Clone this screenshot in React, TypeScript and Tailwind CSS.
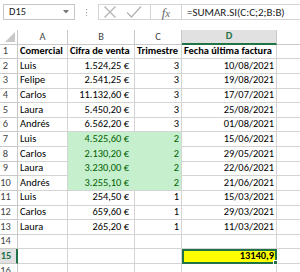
import React from "react";

type Row = {
  n: number;
  a?: string;
  b?: string;
  c?: string;
  d?: string;
  green?: boolean;
  last?: boolean;
};

const rows: Row[] = [
  { n: 2, a: "Luis", b: "1.524,25 €", c: "3", d: "10/08/2021" },
  { n: 3, a: "Felipe", b: "2.541,25 €", c: "3", d: "19/08/2021" },
  { n: 4, a: "Carlos", b: "11.132,60 €", c: "3", d: "17/07/2021" },
  { n: 5, a: "Laura", b: "5.450,20 €", c: "3", d: "25/08/2021" },
  { n: 6, a: "Andrés", b: "6.562,20 €", c: "3", d: "01/08/2021" },
  { n: 7, a: "Luis", b: "4.525,60 €", c: "2", d: "15/06/2021", green: true },
  { n: 8, a: "Carlos", b: "2.130,20 €", c: "2", d: "29/05/2021", green: true },
  { n: 9, a: "Laura", b: "3.230,00 €", c: "2", d: "22/06/2021", green: true },
  { n: 10, a: "Andrés", b: "3.255,10 €", c: "2", d: "21/06/2021", green: true, last: true },
  { n: 11, a: "Luis", b: "254,50 €", c: "1", d: "15/03/2021" },
  { n: 12, a: "Carlos", b: "659,60 €", c: "1", d: "29/03/2021" },
  { n: 13, a: "Laura", b: "265,20 €", c: "1", d: "11/03/2021" },
  { n: 14 },
];

const cols = "grid grid-cols-[18px_50px_67px_47px_95px_1fr]";
const cell = "h-[14.64px] border-r border-b border-[#d4d4d4] flex items-center overflow-hidden whitespace-nowrap";
const rowHead = "h-[14.64px] border-r border-b border-[#c8c8c8] flex items-center justify-center pr-[6px] text-[#444] bg-white";

// green conditional-format cells, no inner gridlines
function greenCls(r: Row, lastCol: boolean) {
  if (!r.green) return "";
  const base = "bg-[#c6efce] text-[#006100]";
  const right = lastCol ? "border-r-[#d4d4d4]" : "border-r-[#c6efce]";
  const bottom = r.last ? "border-b-[#d4d4d4]" : "border-b-[#c6efce]";
  return `${base} ${right} ${bottom}`;
}

const FormulaBar = () => (
  <div className="h-[30px] flex items-start pt-[4px] bg-white">
    <div className="ml-[3px] w-[72px] h-[16px] border border-[#c6c6c6] flex items-center justify-between px-[5px]">
      <span className="text-[#222]">D15</span>
      <svg width="6" height="4" viewBox="0 0 6 4">
        <path d="M0 0 L6 0 L3 3.5 Z" fill="#777" />
      </svg>
    </div>
    <div className="w-[23px] h-[16px] flex flex-col items-center justify-center gap-[2px]">
      <span className="w-[1px] h-[1px] bg-[#999]" />
      <span className="w-[1px] h-[1px] bg-[#999]" />
      <span className="w-[1px] h-[1px] bg-[#999]" />
    </div>
    <div className="w-[53px] h-[16px] border border-[#d4d4d4] flex items-center gap-[9px] pl-[4px]">
      <svg width="14" height="14" viewBox="0 0 14 14">
        <path d="M1.5 1.5 L12.5 12.5 M12.5 1.5 L1.5 12.5" stroke="#b4b4b4" strokeWidth="1.3" fill="none" />
      </svg>
      <svg width="16" height="14" viewBox="0 0 16 14">
        <path d="M1 7.5 L5.5 12 L15 1.5" stroke="#b4b4b4" strokeWidth="1.3" fill="none" />
      </svg>
    </div>
    <div className="w-[31px] h-[16px] border-y border-r border-[#d4d4d4] flex items-center justify-center">
      <span className="font-['Liberation_Serif',serif] italic text-[13px] text-[#666] leading-none">
        f<span className="text-[11px]">x</span>
      </span>
    </div>
    <div className="flex-1 h-[16px] border-y border-r-0 border-[#d4d4d4] flex items-center pl-[5px] text-[#222] text-[11px]">
      =SUMAR.SI(C:C;2;B:B)
    </div>
  </div>
);

export default function App() {
  return (
    <div
      className="w-[300px] h-[272px] overflow-hidden bg-white text-[10.4px] leading-none text-black"
      style={{ fontFamily: "Carlito, Calibri, 'Liberation Sans Narrow', 'Liberation Sans', sans-serif" }}
    >
      <FormulaBar />
      <div className={cols}>
        <div className="h-[14.64px] border-r border-b border-[#c8c8c8] relative bg-white">
          <svg className="absolute right-[2px] bottom-[2px]" width="10" height="10" viewBox="0 0 10 10">
            <path d="M10 0 L10 10 L0 10 Z" fill="#c8c8c8" />
          </svg>
        </div>
        {["A", "B", "C"].map((l) => (
          <div key={l} className="h-[14.64px] border-r border-b border-[#c8c8c8] flex items-center justify-center text-[#444]">
            {l}
          </div>
        ))}
        <div className="h-[14.64px] border-r border-b-2 border-r-[#c8c8c8] border-b-[#217346] bg-[#e1e1e1] flex items-center justify-center text-[#217346] font-bold">
          D
        </div>
        <div className="h-[14.64px] border-b border-[#c8c8c8]" />

        <div className={rowHead}>1</div>
        <div className={`${cell} pl-[2px] font-bold`}>Comercial</div>
        <div className={`${cell} pl-[2px] font-bold`}>Cifra de venta</div>
        <div className={`${cell} pl-[2px] font-bold`}>Trimestre</div>
        <div className={`${cell} pl-[2px] font-bold`}>Fecha última factura</div>
        <div className={`${cell} border-r-0`} />

        {rows.map((r) => (
          <React.Fragment key={r.n}>
            <div className={rowHead}>{r.n}</div>
            <div className={`${cell} pl-[2px]`}>{r.a}</div>
            <div className={`${cell} justify-end pr-[5px] ${greenCls(r, false)}`}>{r.b}</div>
            <div className={`${cell} justify-end pr-[2px] ${greenCls(r, true)}`}>{r.c}</div>
            <div className={`${cell} justify-end pr-[2px]`}>{r.d}</div>
            <div className={`${cell} border-r-0`} />
          </React.Fragment>
        ))}

        <div className="h-[14.64px] border-r-2 border-b border-r-[#217346] border-b-[#c8c8c8] bg-[#e1e1e1] flex items-center justify-center pr-[4px] text-[#217346] font-bold">
          15
        </div>
        <div className={cell} />
        <div className={cell} />
        <div className={cell} />
        <div className="h-[14.64px] relative bg-[#ffff00] border-2 border-[#217346] flex items-center justify-end pr-[1px] font-bold">
          13140,9
          <span className="absolute right-[-3px] bottom-[-3px] w-[5px] h-[5px] bg-[#217346] border border-white" />
        </div>
        <div className={`${cell} border-r-0`} />

        <div className={rowHead}>16</div>
        <div className={cell} />
        <div className={cell} />
        <div className={cell} />
        <div className={cell} />
        <div className={`${cell} border-r-0`} />
      </div>
    </div>
  );
}
